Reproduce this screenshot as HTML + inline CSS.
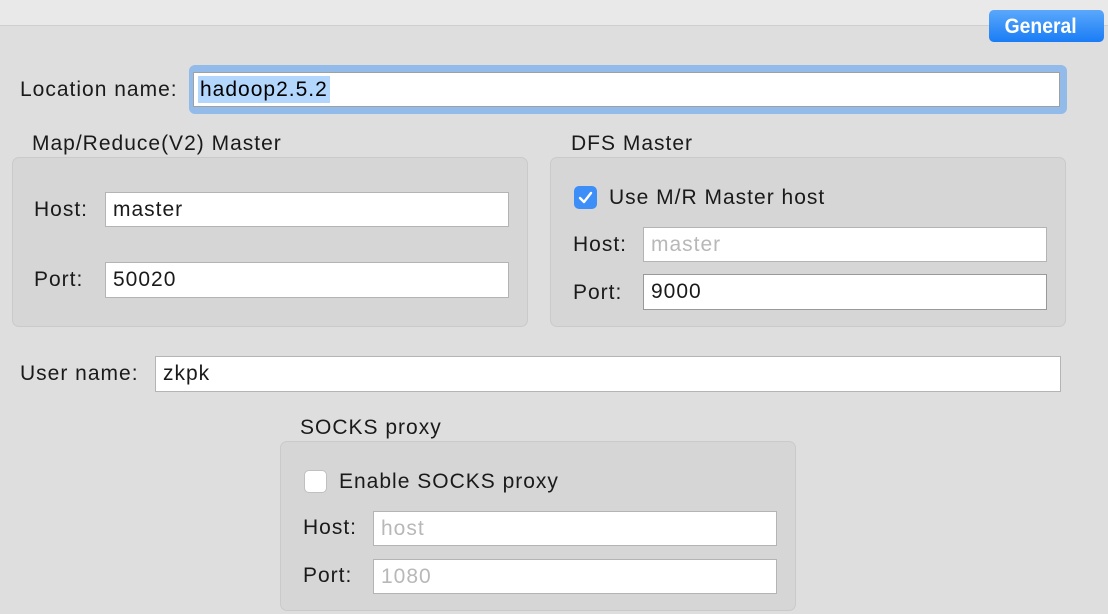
<!DOCTYPE html>
<html><head><meta charset="utf-8"><style>
body{margin:0;width:1108px;height:614px;background:#dedede;position:relative;overflow:hidden;font-family:"Liberation Sans",sans-serif;font-size:21px;letter-spacing:1px;color:#1a1a1a}
.a{position:absolute;white-space:nowrap}
.l{position:absolute;line-height:24px;white-space:nowrap;margin-top:1px}
.in{position:absolute;background:#fff;border:1px solid #b4b4b4;box-sizing:border-box;line-height:34px;padding-left:7px}
.g{position:absolute;background:#d6d6d6;border:1px solid #cacaca;border-radius:7px;box-sizing:border-box}
.dis{color:#b8b8b8}
.cb{position:absolute;width:23px;height:23px;border-radius:5px;box-sizing:border-box}
</style></head><body>
<div class="a" style="left:0;top:0;width:1108px;height:25px;background:#e9e9e9;border-bottom:1px solid #cfcfcf"></div>
<div class="a" style="left:989px;top:10px;width:125px;height:32px;border-radius:5px;background:linear-gradient(#5aa8fb,#1a7cf5);color:#fff;font-size:21px;letter-spacing:0;line-height:34px;padding-left:17px;box-sizing:border-box;font-weight:bold;transform:scaleX(0.92);transform-origin:left">General</div>

<div class="l" style="left:20px;top:77px">Location name:</div>
<div class="a" style="left:189px;top:65px;width:878px;height:49px;background:#92bbea;border-radius:6px"></div>
<div class="in" style="left:193px;top:72px;width:867px;height:35px;border-color:#a0a0a0"><span style="background:#b2d6fc;color:#000;padding:2px 2px;margin-left:-3px">hadoop2.5.2</span></div>

<div class="l" style="left:32px;top:131px">Map/Reduce(V2) Master</div>
<div class="g" style="left:12px;top:157px;width:516px;height:170px"></div>
<div class="l" style="left:34px;top:197px">Host:</div>
<div class="in" style="left:105px;top:192px;width:404px;height:35px">master</div>
<div class="l" style="left:34px;top:267px">Port:</div>
<div class="in" style="left:105px;top:262px;width:404px;height:36px">50020</div>

<div class="l" style="left:571px;top:131px">DFS Master</div>
<div class="g" style="left:550px;top:157px;width:516px;height:170px"></div>
<div class="cb" style="left:574px;top:186px;background:#3d8ff7">
<svg width="23" height="23" viewBox="0 0 23 23" style="position:absolute;left:0;top:0"><path d="M6 12 L10 16 L17 7" fill="none" stroke="#fff" stroke-width="2.4" stroke-linecap="round" stroke-linejoin="round"/></svg></div>
<div class="l" style="left:609px;top:185px">Use M/R Master host</div>
<div class="l" style="left:573px;top:232px">Host:</div>
<div class="in dis" style="left:643px;top:227px;width:404px;height:35px">master</div>
<div class="l" style="left:573px;top:280px">Port:</div>
<div class="in" style="left:643px;top:274px;width:404px;height:36px;border-color:#999">9000</div>

<div class="l" style="left:20px;top:361px">User name:</div>
<div class="in" style="left:155px;top:356px;width:906px;height:36px">zkpk</div>

<div class="l" style="left:300px;top:415px">SOCKS proxy</div>
<div class="g" style="left:280px;top:441px;width:516px;height:170px"></div>
<div class="cb" style="left:304px;top:470px;background:#fff;border:1px solid #c0c0c0"></div>
<div class="l" style="left:339px;top:469px">Enable SOCKS proxy</div>
<div class="l" style="left:303px;top:515px">Host:</div>
<div class="in dis" style="left:373px;top:511px;width:404px;height:35px">host</div>
<div class="l" style="left:303px;top:563px">Port:</div>
<div class="in dis" style="left:373px;top:559px;width:404px;height:35px">1080</div>
</body></html>
